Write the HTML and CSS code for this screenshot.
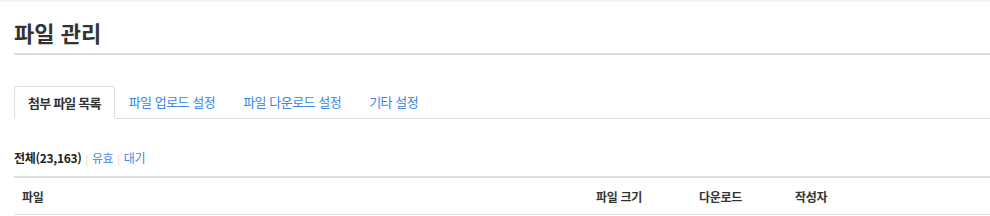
FILE: index.html
```html
<!DOCTYPE html>
<html lang="ko">
<head>
<meta charset="utf-8">
<link rel="stylesheet" href="styles.css">
</head>
<body>
<div class="topbar"></div>
<main class="page">
  <h1 class="title">파일 관리</h1>
  <ul class="tabs">
    <li class="tab active">첨부 파일 목록</li>
    <li class="tab"><a href="#">파일 업로드 설정</a></li>
    <li class="tab"><a href="#">파일 다운로드 설정</a></li>
    <li class="tab"><a href="#">기타 설정</a></li>
  </ul>
  <div class="filter">
    <strong>전체(23,163)</strong><span class="sep">|</span><a href="#">유효</a><span class="sep">|</span><a href="#">대기</a>
  </div>
  <table class="list">
    <thead>
      <tr>
        <th class="c-file">파일</th>
        <th class="c-size">파일 크기</th>
        <th class="c-down">다운로드</th>
        <th class="c-author">작성자</th>
        <th class="c-rest"></th>
      </tr>
    </thead>
  </table>
</main>
</body>
</html>
```
FILE: styles.css
```css
html, body {
  margin: 0;
  padding: 0;
  background: #fff;
}
body {
  font-family: "Noto Sans CJK KR", "Noto Sans", sans-serif;
  color: #333;
}
.topbar {
  height: 2px;
  background: #f4f4f4;
}
.page {
  padding-left: 14px;
}
.title {
  margin: 0;
  padding-top: 15px;
  height: 36px;
  font-size: 22px;
  font-weight: 700;
  line-height: 30px;
  color: #333;
  border-bottom: 2px solid #ddd;
}
.tabs {
  list-style: none;
  margin: 31px 0 0;
  padding: 0;
  display: flex;
  border-bottom: 1px solid #ddd;
  height: 32px;
}
.tab {
  font-size: 13px;
  line-height: 32px;
  padding: 0 14px;
  letter-spacing: -0.5px;
}
.tab a {
  color: #3a86e8;
  text-decoration: none;
}
.tab.active {
  border: 1px solid #ddd;
  border-bottom: 1px solid #fff;
  border-radius: 4px 4px 0 0;
  color: #333;
  font-weight: 700;
  height: 33px;
  box-sizing: border-box;
  background: #fff;
  margin-bottom: -1px;
  line-height: 31px;
  padding: 0 13px;
  letter-spacing: -0.8px;
}
.filter {
  margin-top: 31px;
  font-size: 12px;
  line-height: 16px;
  letter-spacing: -0.3px;
}
.filter strong {
  color: #222;
}
.filter a {
  color: #3a86e8;
  text-decoration: none;
}
.sep {
  color: #d5d5d5;
  margin: 0 4px;
  font-size: 10px;
}
.list {
  margin-top: 9px;
  width: 100%;
  border-collapse: collapse;
  border-top: 2px solid #ddd;
  border-bottom: 1px solid #ddd;
}
.list th {
  text-align: left;
  font-size: 12px;
  font-weight: 700;
  color: #333;
  height: 36px;
  padding: 0;
  letter-spacing: -0.3px;
}
.c-file { padding-left: 8px !important; width: 574px; }
.c-size { width: 103px; }
.c-down { width: 96px; }
.c-author { width: 100px; }
```
